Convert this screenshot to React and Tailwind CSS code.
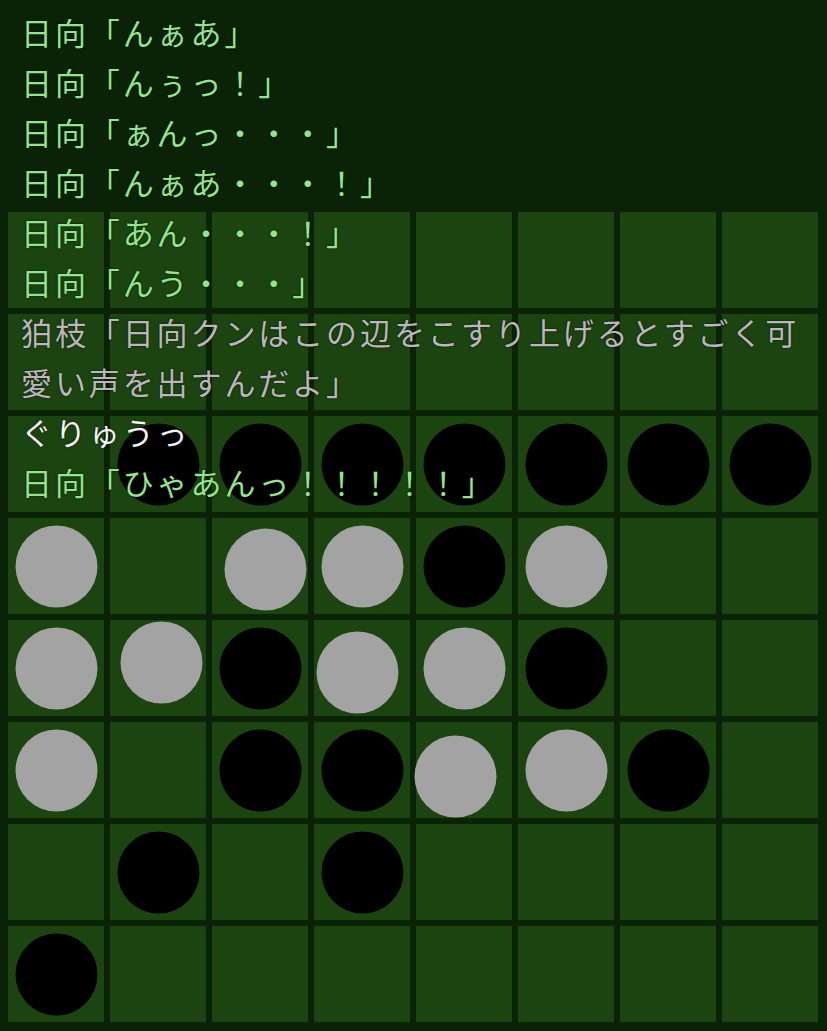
import React from "react";

// board layout, top row first: B = black, W = white, . = empty
const BOARD = [
  "........",
  "........",
  ".BBBBBBB",
  "W.WWBW..",
  "WWBWWB..",
  "W.BBWWB.",
  ".B.B....",
  "B.......",
];

// stones that sit a little off-centre in their square
const NUDGE = {
  "3-2": [5, 3],
  "4-1": [3, -6],
  "4-3": [-5, 4],
  "5-4": [-9, 6],
};

const LINES = [
  { text: "日向「んぁあ」", color: "text-[#93e48c]" },
  { text: "日向「んぅっ！」", color: "text-[#93e48c]" },
  { text: "日向「ぁんっ・・・」", color: "text-[#93e48c]" },
  { text: "日向「んぁあ・・・！」", color: "text-[#93e48c]" },
  { text: "日向「あん・・・！」", color: "text-[#93e48c]" },
  { text: "日向「んう・・・」", color: "text-[#93e48c]" },
  {
    text: "狛枝「日向クンはこの辺をこすり上げるとすごく可愛い声を出すんだよ」",
    color: "text-[#bcb5bc]",
  },
  { text: "ぐりゅうっ", color: "text-[#f4f4f4]" },
  { text: "日向「ひゃあんっ！！！！！」", color: "text-[#93e48c]" },
];

function Stone({ kind, nudge }) {
  const [dx, dy] = nudge || [0, 0];
  return (
    <div
      className={
        kind === "B"
          ? "w-[82px] h-[82px] rounded-full bg-black"
          : "w-[82px] h-[82px] rounded-full bg-[#a3a3a3]"
      }
      style={{ transform: `translate(${dx + 0.5}px, ${dy + 0.5}px)` }}
    />
  );
}

function Board() {
  return (
    <div className="grid grid-cols-[repeat(8,96px)] gap-[6px]">
      {BOARD.map((row, r) =>
        row.split("").map((c, i) => (
          <div
            key={`${r}-${i}`}
            className="h-[96px] bg-[#1b4411] flex items-center justify-center"
          >
            {c !== "." && <Stone kind={c} nudge={NUDGE[`${r}-${i}`]} />}
          </div>
        ))
      )}
    </div>
  );
}

export default function App() {
  return (
    <div className="relative w-[827px] h-[1031px] bg-[#0a2206] overflow-hidden">
      <div className="pt-[212px] pl-[8px]">
        <Board />
      </div>

      {/* chat log drawn on top of the board */}
      <div className="absolute inset-x-0 top-0 pt-[7px] pl-[21px] font-['Noto_Sans_CJK_JP',sans-serif] text-[31px] leading-[50px] tracking-[2.9px] [text-shadow:0_0_2px_rgba(0,0,0,0.85)]">
        {LINES.map((l, i) => (
          <p key={i} className={l.color}>
            {l.text}
          </p>
        ))}
      </div>
    </div>
  );
}
